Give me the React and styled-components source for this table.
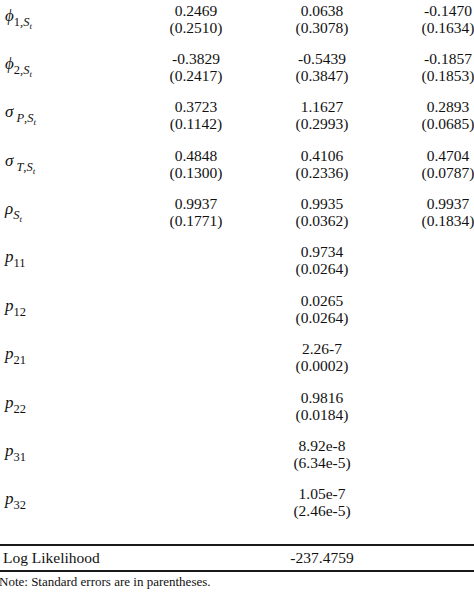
import React from 'react';
import styled, { createGlobalStyle } from 'styled-components';

const Global = createGlobalStyle`
  html, body { margin: 0; padding: 0; background: #fff; overflow: hidden; }
  body { font-family: "Liberation Serif", "Times New Roman", serif; color: #111; }
`;

const Page = styled.div`
  width: 474px;
  height: 593px;
  overflow: hidden;
  padding-top: 1.5px;
  box-sizing: border-box;
`;

const Table = styled.div`
  width: 511px;
  display: flex;
  flex-direction: column;
`;

const Row = styled.div`
  display: grid;
  grid-template-columns: 133px repeat(3, 126px);
  height: 48.4px;
`;

const LabelCell = styled.div`
  padding-left: 5px;
  padding-top: 5px;
  font-size: 17px;
  line-height: 17px;
  font-style: italic;
  white-space: nowrap;
`;

const Sub = styled.span`
  font-size: 12.5px;
  vertical-align: -5px;
  font-style: ${p => (p.$upright ? 'normal' : 'italic')};
  margin-left: ${p => p.$gap || 0}px;
`;

const SubSub = styled.span`
  font-size: 9px;
  vertical-align: -8px;
  font-style: italic;
`;

const ValueCell = styled.div`
  display: flex;
  flex-direction: column;
  align-items: center;
  font-size: 15.5px;
  line-height: 17px;
  white-space: nowrap;
`;

const TotalRow = styled(Row)`
  height: 24px;
  margin-top: 10px;
  border-top: 2px solid #1a1a1a;
  border-bottom: 2px solid #1a1a1a;
  align-items: center;
`;

const TotalLabel = styled.div`
  padding-left: 3px;
  font-size: 15.5px;
  line-height: 17px;
`;

const TotalValue = styled.div`
  grid-column: 3;
  text-align: center;
  font-size: 15.5px;
  line-height: 17px;
`;

const Note = styled.div`
  margin-top: 2px;
  margin-left: -1px;
  font-size: 13px;
  line-height: 15px;
  white-space: nowrap;
`;

const StateSub = () => (
  <>
    <Sub $upright>,</Sub>
    <Sub>S</Sub>
    <SubSub>t</SubSub>
  </>
);

const labels = [
  <>ϕ<Sub $upright>1</Sub><StateSub /></>,
  <>ϕ<Sub $upright>2</Sub><StateSub /></>,
  <>σ<Sub $gap={3}>P</Sub><StateSub /></>,
  <>σ<Sub $gap={3}>T</Sub><StateSub /></>,
  <>ρ<Sub>S</Sub><SubSub>t</SubSub></>,
  <>p<Sub $upright>11</Sub></>,
  <>p<Sub $upright>12</Sub></>,
  <>p<Sub $upright>21</Sub></>,
  <>p<Sub $upright>22</Sub></>,
  <>p<Sub $upright>31</Sub></>,
  <>p<Sub $upright>32</Sub></>,
];

const values = [
  [['0.2469', '(0.2510)'], ['0.0638', '(0.3078)'], ['-0.1470', '(0.1634)']],
  [['-0.3829', '(0.2417)'], ['-0.5439', '(0.3847)'], ['-0.1857', '(0.1853)']],
  [['0.3723', '(0.1142)'], ['1.1627', '(0.2993)'], ['0.2893', '(0.0685)']],
  [['0.4848', '(0.1300)'], ['0.4106', '(0.2336)'], ['0.4704', '(0.0787)']],
  [['0.9937', '(0.1771)'], ['0.9935', '(0.0362)'], ['0.9937', '(0.1834)']],
  [null, ['0.9734', '(0.0264)'], null],
  [null, ['0.0265', '(0.0264)'], null],
  [null, ['2.26-7', '(0.0002)'], null],
  [null, ['0.9816', '(0.0184)'], null],
  [null, ['8.92e-8', '(6.34e-5)'], null],
  [null, ['1.05e-7', '(2.46e-5)'], null],
];

export default function App() {
  return (
    <Page>
      <Global />
      <Table>
        {labels.map((label, i) => (
          <Row key={i}>
            <LabelCell>{label}</LabelCell>
            {values[i].map((v, j) => (
              <ValueCell key={j}>
                {v && (
                  <>
                    <span>{v[0]}</span>
                    <span>{v[1]}</span>
                  </>
                )}
              </ValueCell>
            ))}
          </Row>
        ))}
        <TotalRow>
          <TotalLabel>Log Likelihood</TotalLabel>
          <TotalValue>-237.4759</TotalValue>
        </TotalRow>
      </Table>
      <Note>Note: Standard errors are in parentheses.</Note>
    </Page>
  );
}
